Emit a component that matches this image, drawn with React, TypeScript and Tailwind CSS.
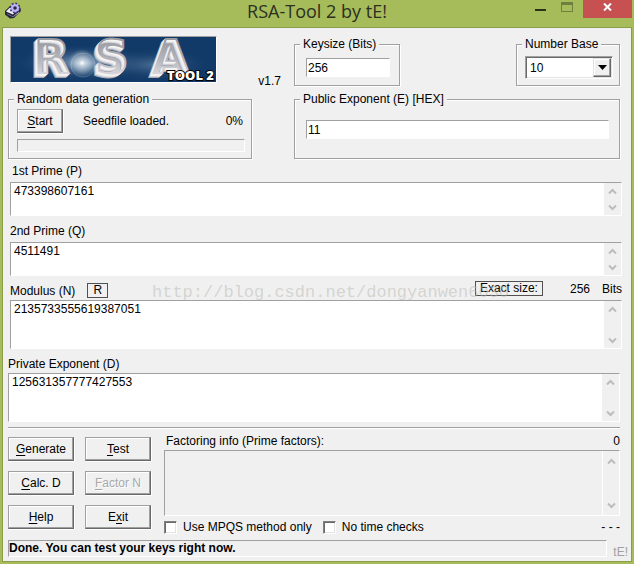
import type { ReactNode } from "react";

const FIELD =
  "block border border-t-[#a0a0a0] border-l-[#a0a0a0] border-r-white border-b-white bg-white outline-none";

function Group({ title, className, children }: { title: string; className: string; children: ReactNode }) {
  return (
    <fieldset
      className={`min-w-0 border border-[#a0a0a0] px-[5px] shadow-[1px_1px_0_#fff,inset_1px_1px_0_#fff] ${className}`}
    >
      <legend className="whitespace-nowrap bg-[#f0f0f0] px-[3px]">{title}</legend>
      {children}
    </fieldset>
  );
}

function PushButton({
  before = "",
  hot,
  after,
  disabled,
  className = "",
}: {
  before?: string;
  hot: string;
  after: string;
  disabled?: boolean;
  className?: string;
}) {
  return (
    <button
      type="button"
      disabled={disabled}
      className={`h-6 border border-t-[#a0a0a0] border-l-[#a0a0a0] border-r-[#696969] border-b-[#696969] bg-[#f0f0f0] shadow-[inset_-1px_-1px_0_#a0a0a0,inset_1px_1px_0_#fff,1px_1px_0_#fff] disabled:text-[#a8a8a8] disabled:[text-shadow:1px_1px_0_#fff] ${className}`}
    >
      {before}
      <span className="underline underline-offset-2">{hot}</span>
      {after}
    </button>
  );
}

function ScrollArrow({ up, label }: { up?: boolean; label: string }) {
  return (
    <button type="button" aria-label={label} className="flex h-4 w-full items-center justify-center">
      <svg width="9" height="7" viewBox="0 0 9 7" fill="none" stroke="#bcbcbc" strokeWidth="2">
        <path d={up ? "M1 5.5 4.5 2 8 5.5" : "M1 1.5 4.5 5 8 1.5"} />
      </svg>
    </button>
  );
}

function Memo({
  id,
  value,
  height,
  readOnly,
}: {
  id: string;
  value: string;
  height: string;
  readOnly?: boolean;
}) {
  return (
    <div
      className={`flex border border-t-[#a0a0a0] border-l-[#a0a0a0] border-r-white border-b-white ${height} ${readOnly ? "bg-[#f0f0f0]" : "bg-white"}`}
    >
      <textarea
        id={id}
        defaultValue={value}
        readOnly={readOnly}
        className="block h-full min-w-0 flex-1 resize-none overflow-hidden bg-transparent px-[3px] py-px outline-none"
      />
      <div
        className={`flex w-[17px] flex-col justify-between bg-[#f0f0f0] ${readOnly ? "border-l border-white py-[2px]" : ""}`}
      >
        <ScrollArrow up label="Scroll up" />
        <ScrollArrow label="Scroll down" />
      </div>
    </div>
  );
}

function Check({ label }: { label: string }) {
  return (
    <label className="flex items-center gap-[6px]">
      <input
        type="checkbox"
        className="size-[13px] appearance-none border border-t-[#808080] border-l-[#808080] border-r-white border-b-white bg-white shadow-[inset_1px_1px_0_#696969,inset_-1px_-1px_0_#e3e3e3]"
      />
      {label}
    </label>
  );
}

function AppIcon() {
  return (
    <svg width="18" height="17" viewBox="0 0 18 17">
      <path d="M1 9 6 4l10 1 1 4-7 7-4 .5-5-4z" fill="#26243c" />
      <path d="M2 9.500 6 5.500l5 5-2 2z" fill="#f0f0f8" />
      <path d="M3 11.500l6 3 6-5v1.500l-6 4-6-3z" fill="#b4b4c8" />
      <circle cx="11" cy="6" r="4.500" fill="#b8b0f0" stroke="#3c3470" strokeWidth="2" strokeDasharray="1.800 1.700" />
      <circle cx="11" cy="6" r="3.800" fill="#c0b8f4" />
      <circle cx="11" cy="6" r="1.800" fill="#2c2458" />
    </svg>
  );
}

function Logo() {
  return (
    <div className="h-[47px] w-[207px] border border-t-[#a0a0a0] border-l-[#a0a0a0] border-r-white border-b-white bg-[#123a68]">
      <svg
        width="205"
        height="45"
        viewBox="0 0 205 45"
        role="img"
        aria-label="RSA Tool 2"
        className="overflow-visible"
      >
        <defs>
          <radialGradient id="glow">
            <stop offset="0" stopColor="#a8c4dc" stopOpacity=".8" />
            <stop offset="1" stopColor="#123a68" stopOpacity="0" />
          </radialGradient>
          <radialGradient id="flare">
            <stop offset="0" stopColor="#fff" />
            <stop offset=".2" stopColor="#fff" stopOpacity=".6" />
            <stop offset="1" stopColor="#fff" stopOpacity="0" />
          </radialGradient>
          <linearGradient id="metal" gradientUnits="userSpaceOnUse" x1="0" y1="2" x2="0" y2="36">
            <stop offset="0" stopColor="#98989f" />
            <stop offset=".6" stopColor="#b4b4bc" />
            <stop offset="1" stopColor="#d4d4da" />
          </linearGradient>
        </defs>
        <ellipse cx="72" cy="26" rx="70" ry="19" fill="url(#glow)" />
        <ellipse cx="145" cy="28" rx="55" ry="17" fill="url(#glow)" opacity=".5" />
        <g
          className="[text-shadow:-1px_1px_0_#f4f4f4,-2px_2px_0_#f0f0f0,-3px_3px_0_#d8d8dc,-4px_4px_0_#a8a8b0]"
          fill="url(#metal)"
          stroke="url(#metal)"
          strokeWidth="2"
          fontFamily="DejaVu Sans"
          fontWeight="bold"
          fontSize="46"
          textAnchor="middle"
        >
          <text x="41" y="36">R</text>
          <text x="101" y="36">S</text>
          <text x="160" y="36">A</text>
        </g>
        <circle cx="71" cy="26" r="14" fill="url(#flare)" />
        <circle cx="72" cy="28" r="12" fill="none" stroke="#fff" strokeOpacity=".2" />
        <text
          x="203"
          y="43"
          textAnchor="end"
          fill="#fff"
          stroke="#000"
          strokeWidth="2"
          paintOrder="stroke"
          fontFamily="Open Sans"
          fontWeight="800"
          fontSize="13"
        >
          TOOL 2
        </text>
      </svg>
    </div>
  );
}

export default function App() {
  return (
    <div className="flex min-h-screen flex-col bg-[#a6bc5b] px-[2px] pb-[2px] font-['Liberation_Sans',Arial,sans-serif] text-[12px] leading-[14px] text-black">
      <header className="grid h-[27px] grid-cols-[1fr_auto_1fr] items-start">
        <div className="pt-[2px] pl-[2px]">
          <AppIcon />
        </div>
        <h1 className="font-['Open_Sans',sans-serif] text-[18px] leading-[22px] text-[#2c3020]">RSA-Tool 2 by tE!</h1>
        <div className="flex items-start justify-end">
          <button type="button" aria-label="Minimize" className="h-[18px] w-[26px] px-[6px]">
            <span className="mt-[2px] block h-[2px] w-[11px] bg-[#2c3018]" />
          </button>
          <button type="button" aria-label="Maximize" className="h-[18px] w-[28px] pl-[6px]">
            <span className="-mt-[5px] block h-[10px] w-3 border border-t-[3px] border-[#707f40]" />
          </button>
          <button
            type="button"
            aria-label="Close"
            className="flex h-[18px] w-[49px] items-center justify-center bg-[#c75050] pb-[4px]"
          >
            <svg width="9" height="8" viewBox="0 0 9 8" stroke="#fff" strokeWidth="2">
              <path d="M1 .5 8 7.500M8 .5 1 7.500" />
            </svg>
          </button>
        </div>
      </header>

      <main className="flex-1 border border-[#8c9d4a] bg-[#f0f0f0]">
        <div className="grid grid-cols-[244px_1fr] gap-x-[42px] gap-y-[6px] pt-[8px] pr-[11px] pl-[5px]">
          <div className="flex h-[50px] items-start justify-between pl-[2px]">
            <Logo />
            <span className="-mr-[29px] pt-[38px]">v1.7</span>
          </div>
          <div className="flex items-end justify-between">
            <Group title="Keysize (Bits)" className="h-[49px] w-[106px]">
              <input
                aria-label="Keysize (Bits)"
                defaultValue="256"
                className={`mt-[7px] ml-[6px] h-[19px] w-[84px] px-px ${FIELD}`}
              />
            </Group>
            <Group title="Number Base" className="h-[49px] w-[104px]">
              <div className="relative mt-[5px] ml-[3px] h-[23px] w-[88px]">
                <select
                  aria-label="Number Base"
                  defaultValue="10"
                  className="h-full w-full appearance-none border border-t-[#a0a0a0] border-l-[#a0a0a0] border-r-white border-b-white bg-white pl-[4px] shadow-[inset_1px_1px_0_#696969,inset_-1px_-1px_0_#e3e3e3] outline-none"
                >
                  <option>10</option>
                  <option>16</option>
                  <option>60</option>
                  <option>64</option>
                </select>
                <span className="pointer-events-none absolute top-[2px] right-[2px] flex h-[19px] w-[18px] items-center justify-center border border-t-[#e3e3e3] border-l-[#e3e3e3] border-r-[#696969] border-b-[#696969] bg-[#f0f0f0] shadow-[inset_-1px_-1px_0_#a0a0a0,inset_1px_1px_0_#fff]">
                  <svg width="9" height="5" viewBox="0 0 9 5">
                    <path d="M0 0h9L4.500 5z" />
                  </svg>
                </span>
              </div>
            </Group>
          </div>

          <Group title="Random data generation" className="h-[67px]">
            <div className="mt-[3px] flex items-center pr-[3px] pl-[3px]">
              <PushButton hot="S" after="tart" className="w-[46px]" />
              <span className="ml-5 flex-1">Seedfile loaded.</span>
              <span>0%</span>
            </div>
            <div
              role="progressbar"
              aria-label="Random data generation"
              aria-valuenow={0}
              className="mt-[6px] mr-px ml-[3px] h-[13px] border border-t-[#a0a0a0] border-l-[#a0a0a0] border-r-white border-b-white"
            />
          </Group>
          <Group title="Public Exponent (E) [HEX]" className="h-[67px]">
            <div className="mt-[14px] pr-[5px] pl-[6px]">
              <input
                aria-label="Public Exponent (E) [HEX]"
                defaultValue="11"
                className={`h-[19px] w-full px-px ${FIELD}`}
              />
            </div>
          </Group>
        </div>

        <div className="pt-[5px] pr-[9px] pl-[7px]">
          <label htmlFor="prime-p" className="mb-1 block pl-[2px]">
            1st Prime (P)
          </label>
          <Memo id="prime-p" value="473398607161" height="h-[34px]" />

          <label htmlFor="prime-q" className="mt-2 mb-1 block">
            2nd Prime (Q)
          </label>
          <Memo id="prime-q" value="4511491" height="h-[34px]" />

          <div className="relative mt-[5px] flex h-[19px] items-center">
            <label htmlFor="modulus">Modulus (N)</label>
            <button type="button" className="ml-3 h-[15px] w-[21px] border border-[#505050] leading-[13px]">
              R
            </button>
            <div className="ml-auto flex items-center pb-1">
              <button type="button" className="h-[15px] w-[68px] border border-[#505050] leading-[13px]">
                Exact size:
              </button>
              <span className="ml-[27px]">256</span>
              <span className="ml-3">Bits</span>
            </div>
            <span className="pointer-events-none absolute top-0 left-[142px] font-['Liberation_Mono',monospace] text-[17px] leading-[24px] text-[#b8b8b0]/50">
              http://blog.csdn.net/dongyanwen6030
            </span>
          </div>
          <Memo id="modulus" value="2135733555619387051" height="h-[49px]" />
        </div>

        <div className="pt-2 pr-[11px] pl-[5px]">
          <label htmlFor="exponent-d" className="mb-[2px] block">
            Private Exponent (D)
          </label>
          <Memo id="exponent-d" value="125631357777427553" height="h-[49px]" />
          <hr className="mt-[5px] h-[2px] border-t border-b border-t-[#a0a0a0] border-b-white" />

          <div className="flex gap-[13px] pt-[5px]">
            <div className="grid grid-cols-[66px_66px] content-start gap-x-[11px] gap-y-[10px] pt-[3px]">
              <PushButton hot="G" after="enerate" />
              <PushButton hot="T" after="est" />
              <PushButton hot="C" after="alc. D" />
              <PushButton hot="F" after="actor N" disabled />
              <PushButton hot="H" after="elp" />
              <PushButton before="E" hot="x" after="it" />
            </div>
            <div className="min-w-0 flex-1">
              <div className="mb-[2px] flex justify-between pl-[2px]">
                <label htmlFor="factors">Factoring info (Prime factors):</label>
                <span>0</span>
              </div>
              <Memo id="factors" value="" height="h-[66px]" readOnly />
              <div className="mt-1 flex gap-[11px]">
                <Check label="Use MPQS method only" />
                <Check label="No time checks" />
                <span className="ml-auto">- - -</span>
              </div>
            </div>
          </div>
        </div>

        <footer className="mt-[6px] flex items-end gap-[6px] pr-[3px] pb-1 pl-[5px]">
          <output className="block h-[17px] flex-1 border border-t-[#a0a0a0] border-l-[#a0a0a0] border-r-white border-b-white font-bold">
            Done. You can test your keys right now.
          </output>
          <span className="-mb-[2px] text-[#a0a0a0]">tE!</span>
        </footer>
      </main>
    </div>
  );
}
